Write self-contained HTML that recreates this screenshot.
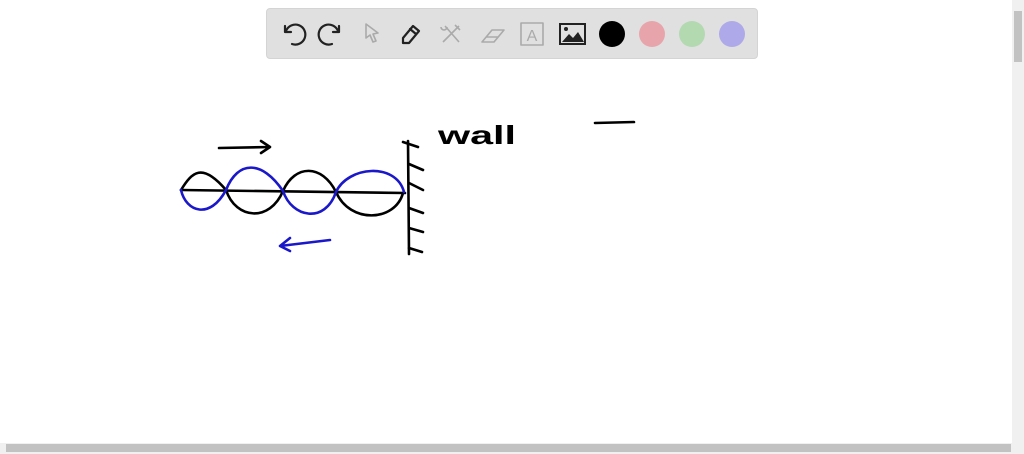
<!DOCTYPE html>
<html><head><style>
body{margin:0;width:1024px;height:454px;background:#fff;overflow:hidden;position:relative;font-family:"Liberation Sans",sans-serif}
.tb{position:absolute;left:266px;top:8px;width:492px;height:51px;background:#e0e0e0;border-radius:4px;border:1px solid #d4d4d4;box-sizing:border-box}
</style></head><body>
<div class="tb"></div>
<svg width="1024" height="454" style="position:absolute;left:0;top:0">
<g fill="none" stroke="#222" stroke-width="2.2" stroke-linecap="round" stroke-linejoin="round">
<path d="M285 26 v6 h6"/><path d="M286 31 A10 10 0 1 1 292 44"/>
<path d="M339 26 v6 h-6"/><path d="M338 31 A10 10 0 1 0 332 44"/>
<path d="M403 38 l10-12 l6 5 l-10 12 h-6z M410 29 l6 5" />
</g>
<g fill="none" stroke="#aaa" stroke-width="1.6" stroke-linejoin="round">
<path d="M366 24 l12 9 -5 1 3 7 -3 1 -3-7 -4 3z"/>
<path d="M443 42 l16-16 M445 26 l14 16 M441 27 a3 3 0 1 0 6 0 M455 25 l5 5"/>
<path d="M482 42 l10-12 h12 l-10 12z M486 37 h12"/>
<rect x="521" y="23" width="22" height="22"/>
<text x="532" y="41" font-size="16" text-anchor="middle" fill="#aaa" stroke="none" font-family="Liberation Sans">A</text>
</g>
<rect x="560" y="24" width="25" height="20" fill="none" stroke="#222" stroke-width="2"/>
<circle cx="566" cy="29" r="2" fill="#222"/>
<path d="M562 42 l7-8 4 4 5-6 6 10z" fill="#222"/>
<circle cx="612" cy="34" r="13" fill="#000"/>
<circle cx="652" cy="34" r="13" fill="#e8a4ab"/>
<circle cx="692" cy="34" r="13" fill="#b3d9b0"/>
<circle cx="732" cy="34" r="13" fill="#aea9e8"/>

<g fill="none" stroke="#000" stroke-width="2.6" stroke-linecap="round" stroke-linejoin="round">
<path d="M181 190 L405 193"/>
<path d="M181 190 C192 172 202 162 226 190"/>
<path d="M226 190 C236 220 270 222 283 191"/>
<path d="M283 191 C295 164 322 164 336 192"/>
<path d="M336 192 C350 224 395 222 403 193"/>
<path d="M408 141 L409 254"/>
<path d="M403 142 l15 5 M409 164 l14 6 M409 183 l14 7 M409 208 l14 5 M409 228 l14 4 M409 248 l13 4"/>
<path d="M219 148 L270 147 M261 141 l9 6 -9 6"/>
<path d="M595 123 L634 122"/>
</g>
<g fill="none" stroke="#1a18c8" stroke-width="2.6" stroke-linecap="round" stroke-linejoin="round">
<path d="M181 190 C186 212 210 220 226 190"/>
<path d="M226 190 C238 160 262 160 283 191"/>
<path d="M283 191 C292 218 325 224 336 192"/>
<path d="M336 192 C348 166 396 162 404 192"/>
<path d="M330 240 L280 246 M290 238 l-10 8 10 5"/>
</g>
<text x="438" y="144" font-size="26" font-weight="bold" font-family="Liberation Sans" fill="#000" textLength="78" lengthAdjust="spacingAndGlyphs">wall</text>

<rect x="1012" y="0" width="12" height="443" fill="#f0f0f0"/>
<rect x="1014" y="11" width="8" height="51" fill="#c2c2c2"/>
<rect x="0" y="443" width="1024" height="11" fill="#f0f0f0"/>
<rect x="6" y="444" width="1005" height="8" fill="#c2c2c2"/>
</svg>
</body></html>
